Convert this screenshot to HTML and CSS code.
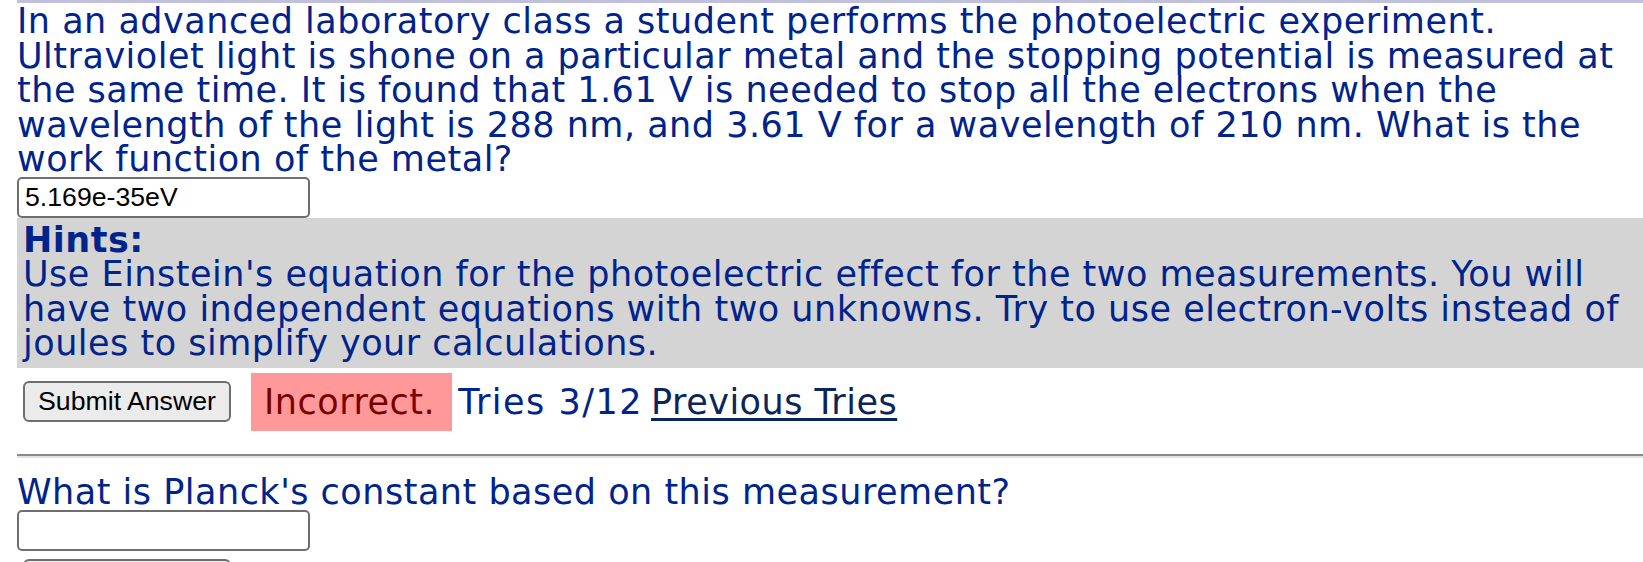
FILE: index.html
```html
<!DOCTYPE html>
<html lang="en">
<head>
    <meta charset="UTF-8">
    <title>Photoelectric Effect</title>
    <link rel="stylesheet" href="styles.css">
</head>
<body>
    <div class="page">
        <div class="problem">
            <p class="question">In an advanced laboratory class a student performs the photoelectric experiment. Ultraviolet light is shone on a particular metal and the stopping potential is measured at the same time. It is found that 1.61 V is needed to stop all the electrons when the wavelength of the light is 288 nm, and 3.61 V for a wavelength of 210 nm. What is the work function of the metal?</p>
            <input class="answer" type="text" value="5.169e-35eV">
            <div class="hints">
                <b class="hints-title">Hints:</b><br>
                Use Einstein's equation for the photoelectric effect for the two measurements. You will have two independent equations with two unknowns. Try to use electron-volts instead of joules to simplify your calculations.
            </div>
            <div class="status-row">
                <button class="submit">Submit Answer</button>
                <span class="incorrect">Incorrect.</span>
                <span class="tries">Tries 3/12</span>
                <a class="prev-tries" href="#">Previous Tries</a>
            </div>
        </div>

        <hr class="divider">

        <div class="problem">
            <p class="question">What is Planck's constant based on this measurement?</p>
            <input class="answer" type="text">
            <div class="status-row next">
                <button class="submit">Submit Answer</button>
            </div>
        </div>
    </div>
</body>
</html>
```

FILE: styles.css
```css
body {
    margin: 0;
    background: #fff;
    font-family: "DejaVu Sans", Verdana, sans-serif;
    font-size: 35px;
    line-height: 34.5px;
    letter-spacing: 0.5px;
    color: #00238c;
    overflow: hidden;
}
.page {
    margin-left: 17px;
    border-top: 3px solid #c0c0da;
    padding-top: 1px;
}
.question {
    margin: 0;
}
.answer {
    display: block;
    box-sizing: border-box;
    width: 293px;
    height: 41px;
    margin: 0;
    padding: 0 6px;
    border: 2px solid #6e6e6e;
    border-radius: 5px;
    font-family: "Liberation Sans", Arial, sans-serif;
    font-size: 26.67px;
    letter-spacing: 0;
    color: #000;
}
.hints {
    background-color: #d4d4d4;
    padding: 5px 0 7px 6px;
}
.hints-title {
    font-weight: bold;
}
.status-row {
    display: flex;
    align-items: center;
    margin-top: 5px;
    margin-left: 6px;
}
.submit {
    box-sizing: border-box;
    width: 208px;
    height: 41px;
    margin-right: 20px;
    padding: 0;
    background-color: #ebebeb;
    border: 2px solid #6e6e6e;
    border-radius: 6px;
    font-family: "Liberation Sans", Arial, sans-serif;
    font-size: 26.67px;
    letter-spacing: 0;
    color: #000;
}
.incorrect {
    background-color: #f99;
    color: #7a0000;
    padding: 12px 17px 12px 13px;
}
.tries {
    margin-left: 6px;
    letter-spacing: 1.5px;
}
.prev-tries {
    margin-left: 8px;
    color: #0c2558;
    text-decoration: underline;
    text-decoration-thickness: 3px;
    text-underline-offset: 4px;
}
.divider {
    margin: 23px 0 17px 0;
    border: none;
    border-top: 2px solid #8a8a8a;
    border-bottom: 2px solid #e2e2e2;
}
.status-row.next {
    margin-top: 8px;
}
```
